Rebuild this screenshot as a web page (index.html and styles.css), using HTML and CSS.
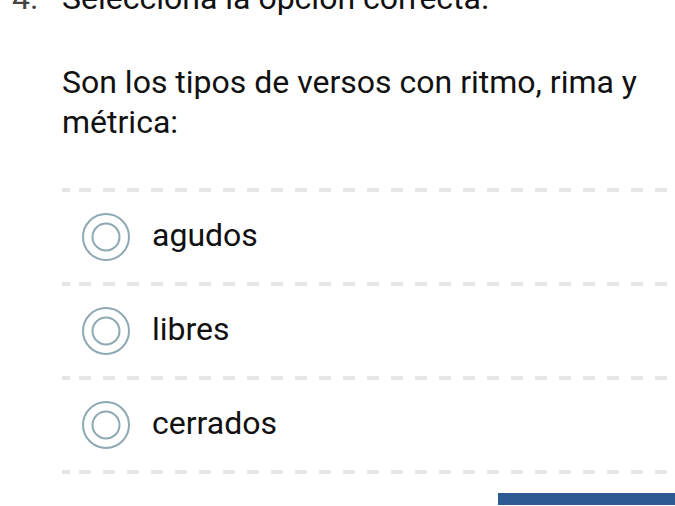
FILE: index.html
```html
<!DOCTYPE html>
<html lang="es">
<head>
<meta charset="utf-8">
<title>Pregunta 4</title>
<link rel="stylesheet" href="styles.css">
</head>
<body>
<main class="quiz">
  <h2 class="title"><span class="num">4.</span><span class="title-text">Selecciona la opción correcta.</span></h2>
  <div class="body">
    <p class="question">Son los tipos de versos con ritmo, rima y métrica:</p>
    <ul class="options">
      <li class="option">
        <svg class="radio" width="48" height="48" viewBox="0 0 48 48"><circle cx="24" cy="24" r="23" fill="none" stroke="#8ea9b4" stroke-width="2"/><circle cx="24" cy="24" r="13.5" fill="none" stroke="#8ea9b4" stroke-width="2"/></svg>
        <span class="label">agudos</span>
      </li>
      <li class="option">
        <svg class="radio" width="48" height="48" viewBox="0 0 48 48"><circle cx="24" cy="24" r="23" fill="none" stroke="#8ea9b4" stroke-width="2"/><circle cx="24" cy="24" r="13.5" fill="none" stroke="#8ea9b4" stroke-width="2"/></svg>
        <span class="label">libres</span>
      </li>
      <li class="option">
        <svg class="radio" width="48" height="48" viewBox="0 0 48 48"><circle cx="24" cy="24" r="23" fill="none" stroke="#8ea9b4" stroke-width="2"/><circle cx="24" cy="24" r="13.5" fill="none" stroke="#8ea9b4" stroke-width="2"/></svg>
        <span class="label">cerrados</span>
      </li>
      <li class="option-end"></li>
    </ul>
  </div>
  <div class="footer"><button class="next" type="button"></button></div>
</main>
</body>
</html>
```
FILE: styles.css
```css
html, body {
  margin: 0;
  padding: 0;
  background: #ffffff;
  overflow: hidden;
}
body {
  width: 675px;
  height: 506px;
  font-family: Roboto, "Noto Sans", "Liberation Sans", sans-serif;
  color: #111111;
}
.quiz {
  display: flex;
  flex-direction: column;
}
.title {
  display: flex;
  margin: -22px 0 0 0;
  padding-left: 12px;
  font-size: 32px;
  line-height: 40px;
  font-weight: 400;
  color: #111111;
  white-space: nowrap;
}
.num {
  width: 50px;
  color: #444444;
}
.body {
  padding-left: 62px;
}
.question {
  margin: 44px 0 0 0;
  font-size: 32px;
  line-height: 40px;
  width: 613px;
}
.options {
  list-style: none;
  margin: 46px 0 0 0;
  padding: 0;
  width: 613px;
}
.option,
.option-end {
  background-image:
    linear-gradient(to right, #e6e6e6 8px, transparent 8px),
    linear-gradient(to right, #e6e6e6 12px, transparent 12px);
  background-size: 8px 4px, 24px 4px;
  background-position: 0 0, 17px 0;
  background-repeat: no-repeat, repeat-x;
}
.option {
  display: flex;
  align-items: center;
  box-sizing: border-box;
  height: 94px;
  padding: 4px 0 0 20px;
}
.option-end {
  height: 4px;
}
.radio {
  flex: none;
  display: block;
}
.label {
  margin-left: 22px;
  font-size: 32px;
  line-height: 40px;
  margin-top: -4px;
}
.footer {
  display: flex;
  justify-content: flex-end;
  padding-top: 19px;
}
.next {
  width: 177px;
  height: 12px;
  border: none;
  padding: 0;
  background: #2d5a93;
}
```
